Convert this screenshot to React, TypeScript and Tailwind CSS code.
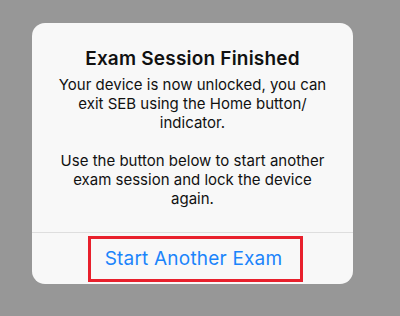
import React from "react";

export default function App() {
  return (
    <div className="w-[400px] h-[316px] bg-[#979797] pl-[32px] pt-[23px]" style={{ fontFamily: "Inter, 'Liberation Sans', sans-serif" }}>
      <div className="w-[321px] h-[261px] bg-[#f8f8f8] rounded-[13px] flex flex-col overflow-hidden">
        <div className="pt-[24px] pb-[24px] px-[12px] flex flex-col items-center text-center text-[#111111]">
          <div className="text-[19px] leading-[24px] font-semibold tracking-[0.2px]">Exam Session Finished</div>
          <div className="mt-[4px] text-[15px] leading-[19px] tracking-[0px]">
            <div>Your device is now unlocked, you can</div>
            <div>exit SEB using the Home button/</div>
            <div>indicator.</div>
            <div>&nbsp;</div>
            <div>Use the button below to start another</div>
            <div>exam session and lock the device</div>
            <div>again.</div>
          </div>
        </div>
        <div className="h-px bg-[#dedede]" />
        <div className="flex-1 flex justify-start pl-[56px] pt-[3px]">
          <div className="w-[215px] h-[46px] border-[3px] border-[#e8202c] flex items-center justify-center pr-[4px]">
            <span className="text-[19px] text-[#1b84fb] tracking-[0.2px]">Start Another Exam</span>
          </div>
        </div>
      </div>
    </div>
  );
}
